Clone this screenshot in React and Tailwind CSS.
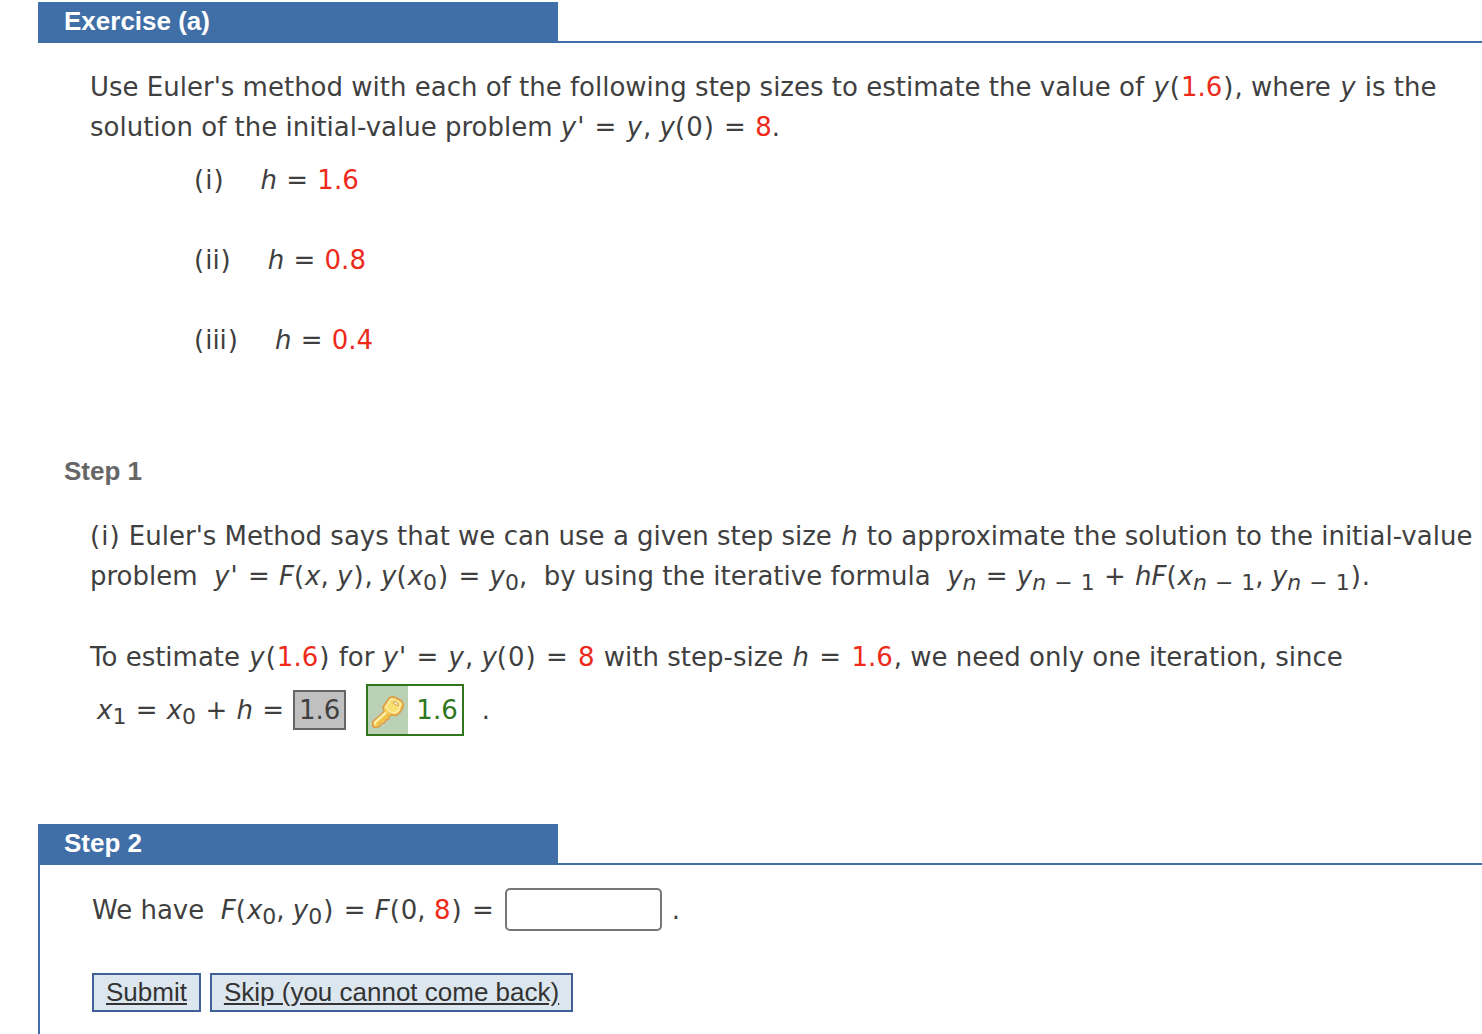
import React from 'react';

const stepSizes = [
  { id: 'i', label: 'i', value: '1.6' },
  { id: 'ii', label: 'ii', value: '0.8' },
  { id: 'iii', label: 'iii', value: '0.4' },
];

const Red = ({ children }) => <span className="text-[#ee2a1b]">{children}</span>;

const Sub = ({ children }) => (
  <sub className="relative top-[5px] align-baseline text-[22px] leading-none">{children}</sub>
);

const Parens = ({ children }) => (
  <>
    <span className="pr-px">(</span>
    {children}
    <span className="px-px">)</span>
  </>
);

const Op = ({ children }) => <span className="px-px">{children}</span>;

const YPrime = () => (
  <i>
    y<span className="px-px">'</span>
  </i>
);

const BarTitle = ({ children }) => (
  <div className="border-b-2 border-[#406ea7]">
    <h2 className="w-[520px] max-w-full bg-[#406ea7] px-[26px] font-['Liberation_Sans',Arial,sans-serif] text-[26px] leading-[39px] font-bold text-white">
      {children}
    </h2>
  </div>
);

const KeyIcon = () => (
  <svg viewBox="0 0 32 32" className="size-8" aria-hidden="true">
    <path
      d="M17.5 1.8 L20 0.8 L23 1.2 L30 5.2 L31.4 8.2 L30.6 12 L27.5 17 L24 19.6 L19 19 L16.8 21 L16.5 23.6 L13.5 24 L12.8 26.8 L9.8 27.4 L6.5 31 L2 31.4 L0.8 30 L0.8 25.5 L12 15.8 L11 11 Z"
      fill="#f3cf57"
      stroke="#dc9b48"
      strokeWidth="1.5"
      strokeLinejoin="round"
    />
    <path
      d="M18.5 3.3 L20.5 2.8 L28.7 7.2 L27 13.8 L23.3 16.8 L18 16 L13.5 11 Z"
      fill="#f8df72"
      stroke="#fdf0b4"
      strokeWidth="1.2"
    />
    <path d="M13.8 16.5 L3 26.3 L3.2 28.5" fill="none" stroke="#fdf3b5" strokeWidth="2" />
    <path d="M5 29 L17.5 17.5" fill="none" stroke="#edb93f" strokeWidth="1.3" />
    <path d="M22 5.2 L26.5 7.6 L26 10 L21.3 7.3 Z" fill="#fff6d5" stroke="#d69a45" strokeWidth="1" />
  </svg>
);

export const ExercisePage = () => {
  return (
    <main className="min-h-screen overflow-x-hidden bg-white pt-[2px] pl-[38px] font-['DejaVu_Sans',Verdana,sans-serif] text-[26px] leading-[40px] text-[#3f3f3f]">
      <section>
        <BarTitle>Exercise (a)</BarTitle>
        <div className="pt-6 pl-[52px] whitespace-nowrap">
          <p>
            Use Euler's method with each of the following step sizes to estimate the value of <Op><i>y</i></Op><Parens><Red>1.6</Red></Parens>, where <Op><i>y</i></Op> is the
            <br />
            solution of the initial-value problem <YPrime /> <Op>=</Op> <Op><i>y</i></Op>, <i>y</i><Parens>0</Parens> <Op>=</Op> <Red>8</Red>.
          </p>
          <ul className="flex flex-col gap-10 pt-[13px] pl-[104px]">
            {stepSizes.map((step) => (
              <li key={step.id} className="flex gap-9">
                <span><Parens>{step.label}</Parens></span>
                <span>
                  <i>h</i> <Op>=</Op> <Red>{step.value}</Red>
                </span>
              </li>
            ))}
          </ul>
        </div>
      </section>

      <section className="pt-[91px]">
        <h2 className="pl-[26px] font-['Liberation_Sans',Arial,sans-serif] text-[26px] font-bold text-[#666666]">
          Step 1
        </h2>
        <div className="pt-[25px] pl-[52px] whitespace-nowrap">
          <p>
            <Parens>i</Parens> Euler's Method says that we can use a given step size <Op><i>h</i></Op> to approximate the solution to the initial-value
            <br />
            problem&nbsp; <YPrime /> <Op>=</Op> <i>F</i><Parens><i>x</i>, <i>y</i></Parens>, <i>y</i><Parens><i>x</i><Sub>0</Sub></Parens> <Op>=</Op> <i>y</i><Sub>0</Sub>,&nbsp; by using the iterative formula&nbsp;{' '}
            <i>y</i><Sub><i>n</i></Sub> <Op>=</Op> <i>y</i><Sub><i>n</i> <Op>−</Op> 1</Sub> <Op>+</Op> <i>hF</i><Parens><i>x</i><Sub><i>n</i> <Op>−</Op> 1</Sub>, <i>y</i><Sub><i>n</i> <Op>−</Op> 1</Sub></Parens>.
          </p>
          <p className="pt-[41px]">
            To estimate <Op><i>y</i></Op><Parens><Red>1.6</Red></Parens> for <YPrime /> <Op>=</Op> <Op><i>y</i></Op>, <i>y</i><Parens>0</Parens> <Op>=</Op> <Op><Red>8</Red></Op> with step-size <Op><i>h</i></Op> <Op>=</Op> <Op><Red>1.6</Red></Op>, we need only one iteration, since
          </p>
          <div className="flex items-center pt-[7px] pl-[7px]">
            <span>
              <i>x</i><Sub>1</Sub> <Op>=</Op> <i>x</i><Sub>0</Sub> <Op>+</Op> <i>h</i> <Op>=</Op>
            </span>
            <span className="ml-2 border-2 border-[#666666] bg-[#c0c0c0] px-1 leading-9">1.6</span>
            <span className="ml-5 flex items-center border-2 border-[#2f761c] text-[#2f761c]">
              <span className="flex h-12 w-10 items-center justify-center bg-[#bbd1b5] pt-1">
                <KeyIcon />
              </span>
              <span className="pr-1 pl-2">1.6</span>
            </span>
            <span className="ml-[18px]">.</span>
          </div>
        </div>
      </section>

      <section className="pt-[88px]">
        <BarTitle>Step 2</BarTitle>
        <div className="border-l-2 border-[#406ea7] pt-[23px] pb-[22px] pl-[52px]">
          <div className="flex items-center whitespace-nowrap">
            <label htmlFor="answer">
              We have&nbsp; <i>F</i><Parens><i>x</i><Sub>0</Sub>, <i>y</i><Sub>0</Sub></Parens> <Op>=</Op> <i>F</i><Parens>0, <Red>8</Red></Parens> <Op>=</Op>
            </label>
            <input
              id="answer"
              type="text"
              className="ml-[10px] h-[43px] w-[157px] rounded-[5px] border-2 border-[#767676] bg-white px-2"
            />
            <span className="ml-[10px]">.</span>
          </div>
          <div className="flex gap-[9px] pt-[42px] font-['Liberation_Sans',Arial,sans-serif] text-[#333333]">
            <button type="button" className="border-2 border-[#406097] bg-[#dce6ee] px-3 leading-[35px] underline">
              Submit
            </button>
            <button type="button" className="border-2 border-[#406097] bg-[#dce6ee] px-3 leading-[35px] underline">
              Skip (you cannot come back)
            </button>
          </div>
        </div>
      </section>
    </main>
  );
};

export default ExercisePage;
